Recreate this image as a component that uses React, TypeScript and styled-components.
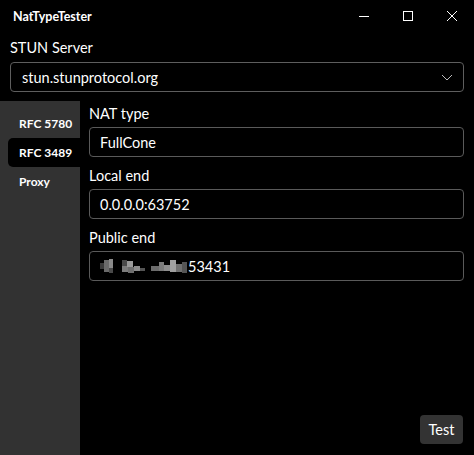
import React from "react";
import styled, { createGlobalStyle } from "styled-components";

const Global = createGlobalStyle`
  html, body { margin: 0; padding: 0; background: #000; }
  body { font-family: Lato, "Open Sans", sans-serif; color: #fff; }
  * { box-sizing: border-box; }
`;

const Window = styled.div`
  width: 474px;
  height: 455px;
  background: #000;
  display: flex;
  flex-direction: column;
  overflow: hidden;
`;

const TitleBar = styled.div`
  height: 32px;
  display: flex;
  align-items: center;
  justify-content: space-between;
  flex-shrink: 0;
`;

const Title = styled.div`
  padding-left: 13px;
  font-size: 12.5px;
  font-weight: 700;
  color: #fff;
`;

const Controls = styled.div`
  display: flex;
  height: 100%;
`;

const ControlButton = styled.div`
  width: 44px;
  height: 100%;
  display: flex;
  align-items: center;
  justify-content: center;
  color: #fff;
`;

const Header = styled.div`
  padding: 0 10px;
  display: flex;
  flex-direction: column;
`;

const Label = styled.div<{ $first?: boolean }>`
  height: 26px;
  line-height: 26px;
  font-size: 14.5px;
  color: #fff;
  margin-top: ${(p) => (p.$first ? 0 : 6)}px;
`;

const HeaderLabel = styled(Label)`
  height: 30px;
  line-height: 32px;
`;

const Combo = styled.div`
  height: 30px;
  border: 1px solid #5e5e5e;
  border-radius: 4px;
  display: flex;
  align-items: center;
  justify-content: space-between;
  padding: 0 10px 0 11px;
  font-size: 14.5px;
  color: #fff;
`;

const Body = styled.div`
  flex: 1;
  display: flex;
  margin-top: 9px;
  min-height: 0;
`;

const Nav = styled.div`
  width: 80px;
  background: #323232;
  padding-top: 8px;
  display: flex;
  flex-direction: column;
`;

const NavItem = styled.div<{ $selected?: boolean }>`
  height: 29px;
  margin-left: 8px;
  padding-left: 11px;
  display: flex;
  align-items: center;
  font-size: 12px;
  font-weight: 700;
  color: #fff;
  background: ${(p) => (p.$selected ? "#000" : "transparent")};
  border-radius: 5px 0 0 5px;
`;

const Content = styled.div`
  flex: 1;
  display: flex;
  flex-direction: column;
  padding: 0 10px 11px 9px;
`;

const TextBox = styled.div`
  height: 30px;
  border: 1px solid #5a5a5a;
  border-radius: 4px;
  display: flex;
  align-items: center;
  padding-left: 10px;
  font-size: 14.5px;
  color: #fff;
`;

const Spacer = styled.div`
  flex: 1;
`;

const Footer = styled.div`
  display: flex;
  justify-content: flex-end;
  padding-right: 1px;
`;

const Button = styled.div`
  width: 43px;
  height: 29px;
  background: #333;
  border-radius: 4px;
  display: flex;
  align-items: center;
  justify-content: center;
  font-size: 14.5px;
  color: #fff;
`;

const Mosaic = () => (
  <svg width="88" height="16" viewBox="0 0 88 16" style={{ display: "block" }}>
    <rect x="0" y="5" width="4" height="6" fill="#3a3a3a" />
    <rect x="4" y="2" width="5" height="12" fill="#6a6a6a" />
    <rect x="9" y="1" width="4" height="9" fill="#8a8a8a" />
    <rect x="9" y="10" width="4" height="5" fill="#4a4a4a" />
    <rect x="22" y="2" width="5" height="6" fill="#4a4a4a" />
    <rect x="22" y="8" width="6" height="6" fill="#7c7c7c" />
    <rect x="27" y="3" width="6" height="6" fill="#9a9a9a" />
    <rect x="28" y="9" width="6" height="6" fill="#6e6e6e" />
    <rect x="34" y="8" width="6" height="5" fill="#8c8c8c" />
    <rect x="40" y="10" width="5" height="3" fill="#555" />
    <rect x="51" y="8" width="8" height="5" fill="#6c6c6c" />
    <rect x="59" y="4" width="5" height="9" fill="#7a7a7a" />
    <rect x="64" y="7" width="6" height="6" fill="#8e8e8e" />
    <rect x="70" y="2" width="6" height="12" fill="#a0a0a0" />
    <rect x="76" y="6" width="6" height="8" fill="#707070" />
    <rect x="82" y="4" width="5" height="11" fill="#555" />
  </svg>
);

const PublicValue = styled.div`
  display: flex;
  align-items: center;
`;

export default function App() {
  return (
    <>
      <Global />
      <Window>
        <TitleBar>
          <Title>NatTypeTester</Title>
          <Controls>
            <ControlButton>
              <svg width="10" height="10" viewBox="0 0 10 10">
                <path d="M0 5.5h10" stroke="#fff" strokeWidth="1" />
              </svg>
            </ControlButton>
            <ControlButton>
              <svg width="10" height="10" viewBox="0 0 10 10">
                <rect x="0.5" y="0.5" width="9" height="9" fill="none" stroke="#fff" strokeWidth="1" />
              </svg>
            </ControlButton>
            <ControlButton>
              <svg width="10" height="10" viewBox="0 0 10 10">
                <path d="M0 0L10 10M10 0L0 10" stroke="#fff" strokeWidth="1" />
              </svg>
            </ControlButton>
          </Controls>
        </TitleBar>
        <Header>
          <HeaderLabel $first>STUN Server</HeaderLabel>
          <Combo>
            <span>stun.stunprotocol.org</span>
            <svg width="12" height="7" viewBox="0 0 12 7">
              <path d="M1 1l5 5 5-5" fill="none" stroke="#bbb" strokeWidth="1" />
            </svg>
          </Combo>
        </Header>
        <Body>
          <Nav>
            <NavItem>RFC 5780</NavItem>
            <NavItem $selected>RFC 3489</NavItem>
            <NavItem>Proxy</NavItem>
          </Nav>
          <Content>
            <Label $first>NAT type</Label>
            <TextBox>FullCone</TextBox>
            <Label>Local end</Label>
            <TextBox>0.0.0.0:63752</TextBox>
            <Label>Public end</Label>
            <TextBox>
              <PublicValue>
                <Mosaic />
                <span>53431</span>
              </PublicValue>
            </TextBox>
            <Spacer />
            <Footer>
              <Button>Test</Button>
            </Footer>
          </Content>
        </Body>
      </Window>
    </>
  );
}
